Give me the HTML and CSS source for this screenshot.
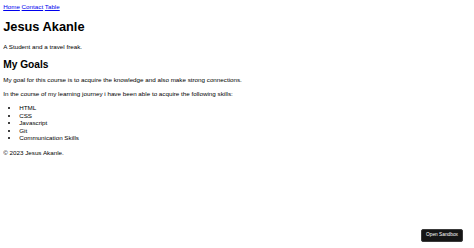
FILE: index.html
```html
<!DOCTYPE html>
<html lang="en">
<head>
<meta charset="utf-8">
<title>Jesus Akanle</title>
<link rel="stylesheet" href="styles.css">
</head>
<body>
<nav class="nav"><a href="#">Home</a> <a href="#">Contact</a> <a href="#">Table</a></nav>
<h1 class="title">Jesus Akanle</h1>
<p class="text">A Student and a travel freak.</p>
<h2 class="subtitle">My Goals</h2>
<p class="text">My goal for this course is to acquire the knowledge and also make strong connections.</p>
<p class="text">In the course of my learning journey i have been able to acquire the following skills:</p>
<ul class="skills">
<li>HTML</li>
<li>CSS</li>
<li>Javascript</li>
<li>Git</li>
<li>Communication Skills</li>
</ul>
<footer class="footer">© 2023 Jesus Akanle.</footer>
<a class="sandbox-btn" href="#">Open Sandbox</a>
</body>
</html>
```
FILE: styles.css
```css
html {
  background: #ffffff;
}
body {
  margin: 3.2px;
  font-family: "Liberation Sans", Arial, sans-serif;
  font-size: 6.25px;
  line-height: 7.5px;
  color: #000000;
}
.nav a {
  color: #0000ee;
}
.title {
  font-size: 12.8px;
  line-height: normal;
  margin: 8.6px 0 9.2px;
}
.subtitle {
  font-size: 10.2px;
  line-height: normal;
  margin: 8px 0 6.5px;
}
.text {
  margin: 6.5px 0;
}
.skills {
  margin: 6.5px 0;
  padding-left: 16px;
}
.footer {
  margin: 7.5px 0 0;
}
.sandbox-btn {
  position: fixed;
  right: 11px;
  bottom: 6px;
  display: flex;
  align-items: center;
  justify-content: center;
  width: 42px;
  height: 13px;
  box-sizing: border-box;
  background: #151515;
  border: 1px solid #3a3a3a;
  border-radius: 2px;
  color: #ffffff;
  font-size: 4.8px;
  line-height: 1;
  text-decoration: none;
}
```
